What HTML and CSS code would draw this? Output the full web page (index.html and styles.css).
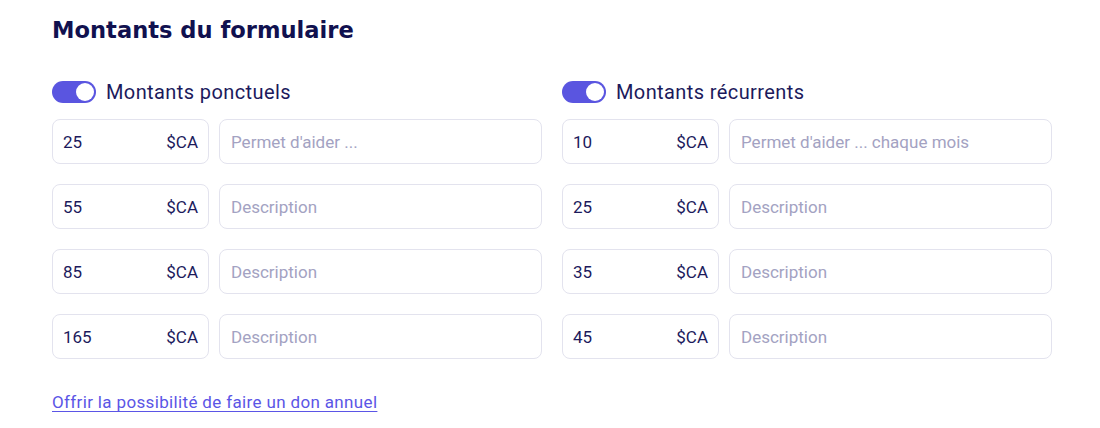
FILE: index.html
```html
<!DOCTYPE html>
<html lang="fr">
<head>
<meta charset="utf-8">
<link rel="stylesheet" href="styles.css">
</head>
<body>
<div class="page">
  <h1 class="title">Montants du formulaire</h1>
  <div class="columns">
    <div class="col">
      <div class="toggle-row">
        <span class="toggle"><span class="knob"></span></span>
        <span class="toggle-label">Montants ponctuels</span>
      </div>
      <div class="row"><div class="amount"><span class="val">25</span><span class="cur">$CA</span></div><div class="desc">Permet d'aider ...</div></div>
      <div class="row"><div class="amount"><span class="val">55</span><span class="cur">$CA</span></div><div class="desc">Description</div></div>
      <div class="row"><div class="amount"><span class="val">85</span><span class="cur">$CA</span></div><div class="desc">Description</div></div>
      <div class="row"><div class="amount"><span class="val">165</span><span class="cur">$CA</span></div><div class="desc">Description</div></div>
    </div>
    <div class="col">
      <div class="toggle-row">
        <span class="toggle"><span class="knob"></span></span>
        <span class="toggle-label">Montants récurrents</span>
      </div>
      <div class="row"><div class="amount"><span class="val">10</span><span class="cur">$CA</span></div><div class="desc">Permet d'aider ... chaque mois</div></div>
      <div class="row"><div class="amount"><span class="val">25</span><span class="cur">$CA</span></div><div class="desc">Description</div></div>
      <div class="row"><div class="amount"><span class="val">35</span><span class="cur">$CA</span></div><div class="desc">Description</div></div>
      <div class="row"><div class="amount"><span class="val">45</span><span class="cur">$CA</span></div><div class="desc">Description</div></div>
    </div>
  </div>
  <a class="link" href="#">Offrir la possibilité de faire un don annuel</a>
</div>
</body>
</html>
```
FILE: styles.css
```css
* { box-sizing: border-box; }
html, body { margin: 0; padding: 0; background: #ffffff; }
body { font-family: Roboto, "Liberation Sans", sans-serif; color: #1c1a5c; }
.page { padding: 14px 52px 0 52px; width: 1100px; }
.title {
  margin: 0;
  font-family: "DejaVu Sans", "Liberation Sans", sans-serif;
  font-weight: 700;
  font-size: 22.6px;
  line-height: 32px;
  color: #11114f;
  letter-spacing: 0;
}
.columns {
  display: grid;
  grid-template-columns: 490px 490px;
  column-gap: 20px;
  margin-top: 35px;
}
.col { display: flex; flex-direction: column; gap: 20px; }
.toggle-row { display: flex; align-items: center; gap: 10px; height: 22px; margin-bottom: -4px; }
.toggle {
  width: 44px; height: 22px; border-radius: 11px; background: #5a55e0;
  display: flex; align-items: center; justify-content: flex-end; padding-right: 2px;
}
.knob { width: 18px; height: 18px; border-radius: 50%; background: #ffffff; }
.toggle-label { font-size: 20px; color: #1c1a5c; letter-spacing: 0.4px; }
.row { display: flex; gap: 10px; height: 45px; }
.amount, .desc {
  border: 1px solid #e3e3ee; border-radius: 8px; display: flex; align-items: center;
  font-size: 17px;
}
.amount { width: 157px; justify-content: space-between; padding: 0 10px 0 10px; color: #1c1a5c; }
.desc { flex: 1; padding: 0 11px; color: #a3a2c2; }
.link {
  display: inline-block; margin-top: 33px; font-size: 17px; color: #5b55e6; letter-spacing: 0.35px;
  text-decoration: underline; text-underline-offset: 3px;
}
```
